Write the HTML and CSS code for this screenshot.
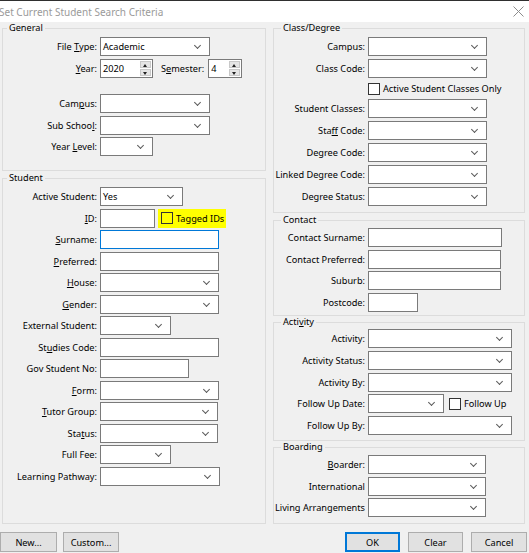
FILE: index.html
```html
<!DOCTYPE html>
<html lang="en">
<head>
    <meta charset="UTF-8">
    <title>Set Current Student Search Criteria</title>
    <link rel="stylesheet" href="styles.css">
</head>
<body>
    <div class="titlebar">
        <span class="title">Set Current Student Search Criteria</span>
        <svg class="close" width="11" height="11" viewBox="0 0 11 11">
            <path d="M0.5 0.5 L10.5 10.5 M10.5 0.5 L0.5 10.5" stroke="#8c8c8c" stroke-width="1" fill="none"/>
        </svg>
    </div>

    <div class="main">
        <div class="col col-left">
            <fieldset class="group general">
                <legend>General</legend>
                <div class="rows">
                    <div class="row">
                        <label class="lbl"><span>File <u>T</u>ype:</span></label>
                        <div class="combo w110">Academic</div>
                    </div>
                    <div class="row">
                        <label class="lbl"><span><u>Y</u>ear:</span></label>
                        <div class="spin w53">
                            <span class="val">2020</span>
                            <span class="arrows"><span class="up"></span><span class="down"></span></span>
                        </div>
                        <label class="sem-lbl">S<u>e</u>mester:</label>
                        <div class="spin w34">
                            <span class="val">4</span>
                            <span class="arrows"><span class="up"></span><span class="down"></span></span>
                        </div>
                    </div>
                    <div class="spacer"></div>
                    <div class="row">
                        <label class="lbl"><span>Cam<u>p</u>us:</span></label>
                        <div class="combo w110"></div>
                    </div>
                    <div class="row">
                        <label class="lbl"><span>Sub Schoo<u>l</u>:</span></label>
                        <div class="combo w110"></div>
                    </div>
                    <div class="row">
                        <label class="lbl"><span>Year <u>L</u>evel:</span></label>
                        <div class="combo w53"></div>
                    </div>
                </div>
            </fieldset>

            <fieldset class="group student">
                <legend>Student</legend>
                <div class="rows">
                    <div class="row">
                        <label class="lbl"><span>Active Student:</span></label>
                        <div class="combo w83">Yes</div>
                    </div>
                    <div class="row">
                        <label class="lbl"><span><u>I</u>D:</span></label>
                        <div class="input w55"></div>
                        <div class="tagged"><span class="chk"></span>Tagged IDs</div>
                    </div>
                    <div class="row">
                        <label class="lbl"><span><u>S</u>urname:</span></label>
                        <div class="input w119 focused"></div>
                    </div>
                    <div class="row">
                        <label class="lbl"><span><u>P</u>referred:</span></label>
                        <div class="input w119"></div>
                    </div>
                    <div class="row">
                        <label class="lbl"><span><u>H</u>ouse:</span></label>
                        <div class="combo w119"></div>
                    </div>
                    <div class="row">
                        <label class="lbl"><span><u>G</u>ender:</span></label>
                        <div class="combo w119"></div>
                    </div>
                    <div class="row">
                        <label class="lbl"><span>External Student:</span></label>
                        <div class="combo w71"></div>
                    </div>
                    <div class="row">
                        <label class="lbl"><span>St<u>u</u>dies Code:</span></label>
                        <div class="input w119"></div>
                    </div>
                    <div class="row">
                        <label class="lbl"><span>Gov Student No:</span></label>
                        <div class="input w89"></div>
                    </div>
                    <div class="row">
                        <label class="lbl"><span><u>F</u>orm:</span></label>
                        <div class="combo w119"></div>
                    </div>
                    <div class="row">
                        <label class="lbl"><span><u>T</u>utor Group:</span></label>
                        <div class="combo w118"></div>
                    </div>
                    <div class="row">
                        <label class="lbl"><span>Sta<u>t</u>us:</span></label>
                        <div class="combo w118"></div>
                    </div>
                    <div class="row">
                        <label class="lbl"><span>Full Fee:</span></label>
                        <div class="combo w71"></div>
                    </div>
                    <div class="row">
                        <label class="lbl"><span>Learning Pathway:</span></label>
                        <div class="combo w120"></div>
                    </div>
                </div>
            </fieldset>
        </div>

        <div class="col col-right">
            <fieldset class="group classdeg">
                <legend>Class/Degree</legend>
                <div class="rows">
                    <div class="row">
                        <label class="lbl"><span>Campus:</span></label>
                        <div class="combo w119"></div>
                    </div>
                    <div class="row">
                        <label class="lbl"><span>Class Code:</span></label>
                        <div class="combo w119"></div>
                    </div>
                    <div class="row short">
                        <span class="lbl"></span>
                        <span class="chk"></span>
                        <span class="chk-text">Active Student Classes Only</span>
                    </div>
                    <div class="row">
                        <label class="lbl"><span>Student Classes:</span></label>
                        <div class="combo w119"></div>
                    </div>
                    <div class="row">
                        <label class="lbl"><span>Sta<u>f</u>f Code:</span></label>
                        <div class="combo w119"></div>
                    </div>
                    <div class="row">
                        <label class="lbl"><span>Degree Code:</span></label>
                        <div class="combo w119"></div>
                    </div>
                    <div class="row">
                        <label class="lbl"><span>Linked Degree Code:</span></label>
                        <div class="combo w119"></div>
                    </div>
                    <div class="row">
                        <label class="lbl"><span>Degree Status:</span></label>
                        <div class="combo w119"></div>
                    </div>
                </div>
            </fieldset>

            <fieldset class="group contact">
                <legend>Contact</legend>
                <div class="rows">
                    <div class="row">
                        <label class="lbl"><span>Contact Surname:</span></label>
                        <div class="input w134"></div>
                    </div>
                    <div class="row">
                        <label class="lbl"><span>Contact Preferred:</span></label>
                        <div class="input w133"></div>
                    </div>
                    <div class="row">
                        <label class="lbl"><span>Suburb:</span></label>
                        <div class="input w133"></div>
                    </div>
                    <div class="row">
                        <label class="lbl"><span>Postcode:</span></label>
                        <div class="input w50"></div>
                    </div>
                </div>
            </fieldset>

            <fieldset class="group activity">
                <legend>Acti<u>v</u>ity</legend>
                <div class="rows">
                    <div class="row">
                        <label class="lbl"><span>Activity:</span></label>
                        <div class="combo w144"></div>
                    </div>
                    <div class="row">
                        <label class="lbl"><span>Activity Status:</span></label>
                        <div class="combo w144"></div>
                    </div>
                    <div class="row">
                        <label class="lbl"><span>Activity By:</span></label>
                        <div class="combo w144"></div>
                    </div>
                    <div class="row">
                        <label class="lbl"><span>Follow Up Date:</span></label>
                        <div class="combo w76"></div>
                        <span class="chk follow"></span>
                        <span class="chk-text">Follow Up</span>
                    </div>
                    <div class="row">
                        <label class="lbl"><span>Follow Up By:</span></label>
                        <div class="combo w144"></div>
                    </div>
                </div>
            </fieldset>

            <fieldset class="group boarding">
                <legend>Boarding</legend>
                <div class="rows">
                    <div class="row">
                        <label class="lbl"><span><u>B</u>oarder:</span></label>
                        <div class="combo w118"></div>
                    </div>
                    <div class="row">
                        <label class="lbl"><span>International</span></label>
                        <div class="combo w118"></div>
                    </div>
                    <div class="row">
                        <label class="lbl"><span>Living Arrangements</span></label>
                        <div class="combo w118"></div>
                    </div>
                </div>
            </fieldset>
        </div>
    </div>

    <div class="buttons">
        <div class="btn-group">
            <button class="btn w57">New...</button>
            <button class="btn w56">Custom...</button>
        </div>
        <div class="btn-group right">
            <button class="btn w55 default">OK</button>
            <button class="btn w55">Clear</button>
            <button class="btn w56">Cancel</button>
        </div>
    </div>
</body>
</html>
```

FILE: styles.css
```css
html, body {
    margin: 0;
    padding: 0;
    background-color: #f0f0f0;
    font-family: "Noto Sans", "Open Sans", sans-serif;
    font-size: 9.2px;
    color: #000;
}

body {
    width: 529px;
    height: 553px;
    overflow: hidden;
}

u {
    text-decoration-thickness: 1px;
    text-underline-offset: 1px;
}

/* title bar */
.titlebar {
    height: 21px;
    border-top: 1px solid #2f2f2f;
    background-color: #fff;
    display: flex;
    align-items: center;
    justify-content: space-between;
}

.title {
    color: #9a9a9a;
    font-size: 10px;
    margin-left: -1px;
}

.close {
    margin-right: 5px;
}

/* main columns */
.main {
    display: flex;
    gap: 7px;
    padding-left: 2px;
}

.col {
    display: flex;
    flex-direction: column;
}

.col-left {
    width: 264px;
}

.col-right {
    width: 252px;
}

.group {
    margin: 0;
    padding: 3px 0 6px;
    border: 1px solid #dcdcdc;
    min-width: 0;
}

.group legend {
    padding: 0 2px;
    margin-left: 4px;
    line-height: 12px;
}

.col-right .group legend {
    margin-left: 7px;
}

.general {
    padding-bottom: 14px;
}

.student {
    margin-top: 1px;
    flex: 1;
}

.classdeg {
    padding-bottom: 6px;
}

.contact {
    margin-top: 1px;
    padding-top: 2px;
    padding-bottom: 3.5px;
}

.activity {
    padding-top: 1px;
    padding-bottom: 5px;
}

.boarding {
    padding-top: 2px;
    padding-bottom: 6px;
}

.rows {
    display: flex;
    flex-direction: column;
    gap: 2.5px;
}

.classdeg .rows {
    gap: 3px;
}

.activity .rows {
    gap: 2.75px;
}

.row {
    display: flex;
    align-items: center;
    height: 19px;
}

.row.short {
    height: 15px;
}

.spacer {
    height: 11.5px;
}

.lbl {
    width: 94px;
    margin-right: 3px;
    flex: none;
    display: flex;
    justify-content: flex-end;
    white-space: nowrap;
}

.col-right .lbl {
    width: 91px;
}

/* fields */
.combo, .input, .spin {
    height: 19px;
    box-sizing: border-box;
    border: 1px solid #7a7a7a;
    background-color: #fff;
    flex: none;
}

.combo {
    position: relative;
    display: flex;
    align-items: center;
    padding-left: 2px;
}

.combo::after {
    content: "";
    position: absolute;
    right: 9px;
    top: 5px;
    width: 4px;
    height: 4px;
    border-right: 1px solid #5a5a5a;
    border-bottom: 1px solid #5a5a5a;
    transform: rotate(45deg);
}

.input.focused {
    border-color: #0078d7;
}

.spin {
    display: flex;
}

.spin .val {
    flex: 1;
    padding-left: 2px;
    line-height: 17px;
}

.spin .arrows {
    width: 13px;
    display: flex;
    flex-direction: column;
    gap: 1px;
    padding: 1px;
    box-sizing: border-box;
}

.spin .up, .spin .down {
    flex: 1;
    background-color: #e5e5e5;
    border: 1px solid #c8c8c8;
    position: relative;
}

.spin .up::after, .spin .down::after {
    content: "";
    position: absolute;
    left: 2px;
    border-left: 2.5px solid transparent;
    border-right: 2.5px solid transparent;
}

.spin .up::after {
    top: 2px;
    border-bottom: 3px solid #222;
}

.spin .down::after {
    top: 2px;
    border-top: 3px solid #222;
}

.sem-lbl {
    margin-left: 8px;
    margin-right: 4px;
}

.chk {
    width: 12px;
    height: 12px;
    box-sizing: border-box;
    border: 1px solid #333;
    background-color: #fff;
    flex: none;
}

.chk-text {
    margin-left: 3px;
    white-space: nowrap;
}

.chk.follow {
    margin-left: 5px;
}

.tagged {
    display: flex;
    align-items: center;
    gap: 3px;
    height: 19px;
    margin-left: 3px;
    padding: 0 2px 0 3px;
    background-color: #ffff00;
}

.tagged .chk {
    background-color: transparent;
}

/* widths */
.w34 { width: 34px; }
.w50 { width: 50px; }
.w53 { width: 53px; }
.w55 { width: 55px; }
.w56 { width: 56px; }
.w57 { width: 57px; }
.w71 { width: 71px; }
.w76 { width: 76px; }
.w83 { width: 83px; }
.w89 { width: 89px; }
.w110 { width: 110px; }
.w118 { width: 118px; }
.w119 { width: 119px; }
.w120 { width: 120px; }
.w133 { width: 133px; }
.w134 { width: 134px; }
.w144 { width: 144px; }

/* buttons */
.buttons {
    display: flex;
    justify-content: space-between;
    margin-top: 8px;
    padding-right: 2px;
}

.btn-group {
    display: flex;
    gap: 6px;
}

.btn-group.right {
    gap: 8px;
}

.btn {
    height: 20px;
    box-sizing: border-box;
    border: 1px solid #adadad;
    background-color: #e1e1e1;
    font-family: inherit;
    font-size: 9.2px;
    color: #000;
    padding: 0;
}

.btn.default {
    border: 2px solid #0078d7;
}
```
